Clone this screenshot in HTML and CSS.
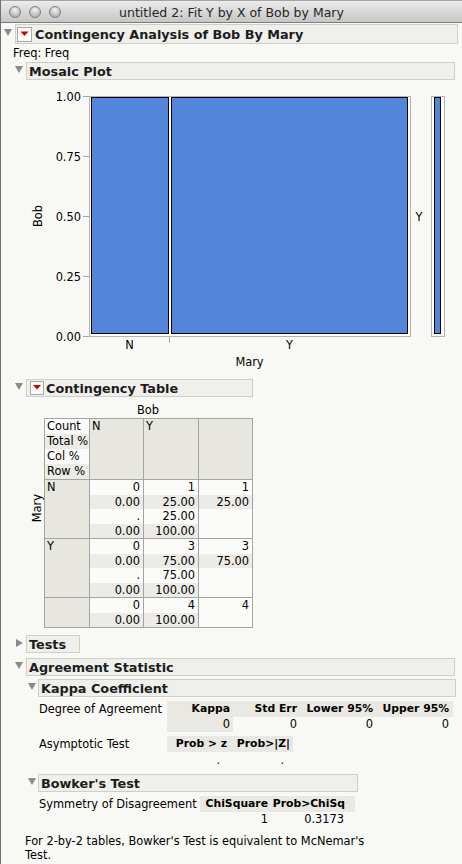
FILE: index.html
```html
<!DOCTYPE html>
<html lang="en">
<head>
  <meta charset="UTF-8" />
  <title>untitled 2: Fit Y by X of Bob by Mary</title>
  <link rel="stylesheet" href="styles.css">
</head>
<body>
<div class="window">

  <!-- Window chrome -->
  <div class="titlebar">
    <div class="lights"><span class="light"></span><span class="light"></span><span class="light"></span></div>
    <div class="wtitle">untitled 2: Fit Y by X of Bob by Mary</div>
    <div></div>
  </div>

  <div class="report">

    <div class="ohead top">
      <span class="tri"></span>
      <div class="hbox w-top">
        <svg class="menu" width="15" height="15" viewBox="0 0 15 15"><rect x="0.5" y="0.5" width="14" height="14" fill="#fcfcfc" stroke="#a8a8a8"/><path d="M3.5 4.5h8l-4 4.5z" fill="#d10000"/></svg>
        Contingency Analysis of Bob By Mary
      </div>
    </div>
    <div class="freq">Freq: Freq</div>

    <!-- Mosaic plot -->
    <div class="ohead l1">
      <span class="tri"></span>
      <div class="hbox w-wide">Mosaic Plot</div>
    </div>
    <svg class="mosaic" width="440" height="299" viewBox="15 80 440 299">
      <rect class="frame" x="89.5" y="96.5" width="321" height="240"/>
      <rect class="bar" x="91.5" y="97.5" width="77" height="236"/>
      <rect class="bar" x="171.5" y="97.5" width="236" height="236"/>
      <g class="tick">
        <line x1="83" y1="96.5" x2="89" y2="96.5"/>
        <line x1="83" y1="156.5" x2="89" y2="156.5"/>
        <line x1="83" y1="216.5" x2="89" y2="216.5"/>
        <line x1="83" y1="276.5" x2="89" y2="276.5"/>
        <line x1="83" y1="336.5" x2="89" y2="336.5"/>
        <line x1="169.5" y1="337" x2="169.5" y2="343"/>
      </g>
      <g class="lbl" text-anchor="end">
        <text x="81" y="101">1.00</text>
        <text x="81" y="161">0.75</text>
        <text x="81" y="221">0.50</text>
        <text x="81" y="281">0.25</text>
        <text x="81" y="341">0.00</text>
      </g>
      <g class="lbl" text-anchor="middle">
        <text x="129.5" y="349">N</text>
        <text x="289.5" y="349">Y</text>
        <text x="249.5" y="366">Mary</text>
        <text x="419" y="221">Y</text>
        <text transform="translate(42 216) rotate(-90)">Bob</text>
      </g>
      <rect class="frame" x="431.5" y="96.5" width="13" height="240"/>
      <rect class="bar" x="434.5" y="97.5" width="6" height="236"/>
    </svg>

    <!-- Contingency table -->
    <div class="ohead l1">
      <span class="tri"></span>
      <div class="hbox w-ct">
        <svg class="menu sub" width="14" height="14" viewBox="0 0 14 14"><rect x="0.5" y="0.5" width="13" height="13" fill="#fcfcfc" stroke="#a8a8a8"/><path d="M3 4h8l-4 4.5z" fill="#d10000"/></svg>
        Contingency Table
      </div>
    </div>
    <div class="bob">Bob</div>
    <div class="ct-row">
      <div class="mary"><span>Mary</span></div>
      <div class="ct">
        <div class="cell hd lab">
          <div class="ln">Count</div><div class="ln s">Total %</div><div class="ln">Col %</div><div class="ln s">Row %</div>
        </div>
        <div class="cell g hd"><div class="ln">N</div></div>
        <div class="cell g hd"><div class="ln">Y</div></div>
        <div class="cell g"></div>

        <div class="cell g hd"><div class="ln">N</div></div>
        <div class="cell">
          <div class="ln">0</div><div class="ln s">0.00</div><div class="ln">.</div><div class="ln s">0.00</div>
        </div>
        <div class="cell">
          <div class="ln">1</div><div class="ln s">25.00</div><div class="ln">25.00</div><div class="ln s">100.00</div>
        </div>
        <div class="cell">
          <div class="ln">1</div><div class="ln s">25.00</div>
        </div>

        <div class="cell g hd"><div class="ln">Y</div></div>
        <div class="cell">
          <div class="ln">0</div><div class="ln s">0.00</div><div class="ln">.</div><div class="ln s">0.00</div>
        </div>
        <div class="cell">
          <div class="ln">3</div><div class="ln s">75.00</div><div class="ln">75.00</div><div class="ln s">100.00</div>
        </div>
        <div class="cell">
          <div class="ln">3</div><div class="ln s">75.00</div>
        </div>

        <div class="cell g"></div>
        <div class="cell">
          <div class="ln">0</div><div class="ln s">0.00</div>
        </div>
        <div class="cell">
          <div class="ln">4</div><div class="ln s">100.00</div>
        </div>
        <div class="cell">
          <div class="ln">4</div>
        </div>
      </div>
    </div>

    <div class="ohead l1 tests">
      <span class="tri closed"></span>
      <div class="hbox w-tests">Tests</div>
    </div>

    <!-- Agreement statistic -->
    <div class="ohead l1 agree">
      <span class="tri"></span>
      <div class="hbox w-wide">Agreement Statistic</div>
    </div>

    <div class="ohead l2 kappa-head">
      <span class="tri"></span>
      <div class="hbox w-kappa">Kappa Coefficient</div>
    </div>
    <div class="stat first">
      <div class="slabel">Degree of Agreement</div>
      <div class="sgrid kappa">
        <div class="h">Kappa</div><div class="h">Std Err</div><div class="h">Lower 95%</div><div class="h p4">Upper 95%</div>
        <div class="d g">0</div><div class="d">0</div><div class="d">0</div><div class="d p4">0</div>
      </div>
    </div>
    <div class="stat">
      <div class="slabel">Asymptotic Test</div>
      <div class="sgrid asym">
        <div class="h">Prob &gt; z</div><div class="h">Prob&gt;|Z|</div>
        <div class="d dot1">.</div><div class="d dot2">.</div>
      </div>
    </div>

    <div class="ohead l2 bowker-head">
      <span class="tri"></span>
      <div class="hbox w-bowker">Bowker's Test</div>
    </div>
    <div class="stat">
      <div class="slabel wide">Symmetry of Disagreement</div>
      <div class="sgrid bowk">
        <div class="h p4">ChiSquare</div><div class="h p10">Prob&gt;ChiSq</div>
        <div class="d p4">1</div><div class="d p11">0.3173</div>
      </div>
    </div>

    <p class="note">For 2-by-2 tables, Bowker's Test is equivalent to McNemar's Test.</p>
  </div>
</div>
</body>
</html>
```

FILE: styles.css
```css
body {
  margin: 0;
  background: #f8f8f4;
  font-family: "DejaVu Sans", sans-serif;
  font-size: 11.4px;
  color: #000;
}

.window {
  width: 462px;
  height: 864px;
  box-sizing: border-box;
  border-left: 1px solid #707070;
  overflow: hidden;
}

/* Title bar */
.titlebar {
  height: 23px;
  box-sizing: border-box;
  display: grid;
  grid-template-columns: 1fr auto 1fr;
  background: linear-gradient(#ececec, #d6d6d6 55%, #c6c6c6);
  border-top: 1px solid #a4a4a4;
  border-bottom: 1px solid #7c7c7c;
}

.lights {
  display: flex;
  gap: 8px;
  padding: 5px 0 0 8px;
}

.light {
  width: 12px;
  height: 12px;
  box-sizing: border-box;
  border-radius: 50%;
  border: 1px solid #7f7f7f;
  background: radial-gradient(circle at 50% 30%, #f4f4f4, #c4c4c4 55%, #a2a2a2);
}

.wtitle {
  font-size: 12.5px;
  line-height: 21px;
  padding-top: 1px;
  color: #262626;
  white-space: nowrap;
}

/* Outline headers */
.ohead {
  display: flex;
  align-items: flex-start;
}

.tri {
  width: 0;
  height: 0;
  border-left: 4px solid transparent;
  border-right: 4px solid transparent;
  border-top: 7px solid #8a8a8a;
  margin: 4px 3px 0 14px;
}

.tri.closed {
  border-left: 7px solid #8a8a8a;
  border-top: 4.5px solid transparent;
  border-bottom: 4.5px solid transparent;
  border-right: 0;
  margin: 4px 3px 0 15px;
}

.top {
  margin-top: 1px;
}

.top .tri {
  margin: 5px 3px 0 3px;
}

.l2 .tri {
  margin: 4px 2px 0 27px;
}

.hbox {
  box-sizing: border-box;
  height: 18px;
  display: flex;
  align-items: center;
  padding-left: 2px;
  border: 1px solid #cfcfca;
  background: #efefeb;
  font-weight: bold;
  font-size: 12.8px;
  color: #1c1c1c;
  white-space: nowrap;
}

.w-top {
  width: 443px;
  height: 20px;
  padding-left: 1px;
}

.w-wide { width: 429px; }
.w-ct { width: 227px; }
.w-tests { width: 54px; }
.w-kappa { width: 418px; }
.w-bowker { width: 320px; }

.menu {
  margin-right: 3px;
  flex: none;
}

.menu.sub {
  margin: 0 2px 0 1px;
}

.freq {
  height: 18px;
  line-height: 18px;
  padding-left: 12px;
}

/* Mosaic plot */
.mosaic {
  display: block;
  margin-left: 14px;
}

.frame {
  fill: #ffffff;
  stroke: #b4b4b4;
}

.bar {
  fill: #5386da;
  stroke: #000;
}

.tick line {
  stroke: #a8a8a8;
}

.lbl {
  font-family: "DejaVu Sans", sans-serif;
  font-size: 11.4px;
  fill: #000;
}

/* Contingency table */
.bob {
  height: 15px;
  line-height: 15px;
  padding: 6px 0 0 136px;
}

.ct-row {
  display: flex;
}

.mary {
  width: 43px;
  display: flex;
  justify-content: flex-end;
  align-items: flex-start;
  padding-top: 76px;
}

.mary span {
  writing-mode: vertical-rl;
  transform: rotate(180deg);
  line-height: 13px;
}

.ct {
  display: grid;
  grid-template-columns: 44px 53px 54px 53px;
  grid-template-rows: 60px 58px 58px 29px;
  gap: 1px;
  padding: 1px;
  background: #a4a4a4;
}

.cell {
  background: #fbfbf9;
}

.cell.g {
  background: #e7e6df;
}

.ln {
  height: 14.5px;
  line-height: 14.5px;
  text-align: right;
  padding-right: 3px;
  white-space: nowrap;
}

.ln.s {
  background: #ecebe5;
}

.hd .ln {
  height: 15px;
  line-height: 15px;
  text-align: left;
  padding: 0 0 0 2px;
}

.lab .ln {
  padding-left: 2px;
}

/* Statistics */
.tests { margin-top: 7px; }
.agree { margin-top: 5px; }
.kappa-head { margin-top: 3px; }
.bowker-head { margin-top: 6px; }

.stat {
  display: flex;
  margin-top: 4px;
  padding-left: 38px;
}

.slabel {
  width: 128px;
  height: 16px;
  line-height: 16px;
  white-space: nowrap;
}

.slabel.wide {
  width: 161px;
}

.sgrid {
  display: grid;
  grid-auto-rows: 16px 15px;
}

.kappa { grid-template-columns: 66px 67px 76px 77px; }
.asym { grid-template-columns: 63px 63px; grid-auto-rows: 16px 16px; }
.bowk { grid-template-columns: 72px 83px; }

.sgrid .h {
  background: #e9e8e2;
  font-weight: bold;
  font-size: 10.8px;
  line-height: 16px;
  text-align: right;
  padding-right: 3px;
  white-space: nowrap;
}

.sgrid .d {
  text-align: right;
  padding-right: 3px;
  line-height: 15px;
}

.asym .d { line-height: 16px; }
.sgrid .d.g { background: #e9e8e2; }
.sgrid .p4 { padding-right: 4px; }
.sgrid .p10 { padding-right: 10px; }
.sgrid .p11 { padding-right: 11px; }
.sgrid .dot1 { padding-right: 10px; }
.sgrid .dot2 { padding-right: 9px; }

.note {
  width: 365px;
  margin: 7px 0 0 24px;
  line-height: 14px;
}
```
